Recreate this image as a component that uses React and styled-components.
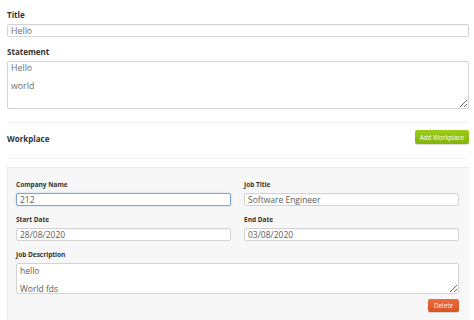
import styled, { createGlobalStyle } from 'styled-components';

const Global = createGlobalStyle`
  body {
    margin: 0;
    background: #fff;
    font-family: "Open Sans", "Liberation Sans", sans-serif;
    color: #333;
  }
`;

const Page = styled.div`
  padding: 9px 5px 0 7px;
  display: flex;
  flex-direction: column;
`;

const Field = styled.div`
  display: flex;
  flex-direction: column;
  margin-bottom: ${(p) => p.$mb || 0}px;
`;

const Label = styled.label`
  font-size: ${(p) => (p.$small ? 6.5 : 8)}px;
  font-weight: 700;
  line-height: ${(p) => (p.$small ? 9 : 11)}px;
  color: #333;
  margin-bottom: 4px;
`;

const Input = styled.input`
  box-sizing: border-box;
  height: 13px;
  width: 100%;
  padding: 0 3px;
  font-family: inherit;
  font-size: ${(p) => (p.$big ? 8.5 : 8.8)}px;
  color: ${(p) => (p.$big ? '#5a5a5a' : '#6e6e6e')};
  border: 1px solid ${(p) => (p.$focus ? '#7aa7d6' : '#d4d4d4')};
  border-radius: 2px;
  background: #fff;
  box-shadow: ${(p) => (p.$focus ? '0 0 2px rgba(102,160,220,0.5)' : 'inset 0 1px 1px rgba(0,0,0,0.04)')};
  outline: none;
`;

const Area = styled.textarea`
  box-sizing: border-box;
  height: ${(p) => p.$h}px;
  width: 100%;
  padding: 2px 3px;
  font-family: inherit;
  font-size: ${(p) => (p.$big ? 8.5 : 8.8)}px;
  line-height: 9px;
  color: ${(p) => (p.$big ? '#5a5a5a' : '#6e6e6e')};
  border: 1px solid #d4d4d4;
  border-radius: 2px;
  resize: vertical;
  outline: none;
  display: block;
`;

const Divider = styled.div`
  height: 1px;
  background: #f3f3f3;
`;

const SectionHead = styled.div`
  display: flex;
  align-items: flex-start;
  justify-content: space-between;
  height: 35px;
`;

const SectionTitle = styled.div`
  margin-top: 10px;
  font-size: 8px;
  line-height: 11px;
  font-weight: 700;
  color: #333;
`;

const Button = styled.button`
  margin-top: ${(p) => p.$mt || 0}px;
  height: ${(p) => (p.$danger ? 13 : 14)}px;
  padding: 0 ${(p) => (p.$pad ? p.$pad : 5)}px;
  border: none;
  border-radius: 2px;
  color: #fff;
  font-family: inherit;
  font-size: 6.3px;
  line-height: 13px;
  background: ${(p) =>
    p.$danger
      ? 'linear-gradient(#ea6c40, #d9531e)'
      : 'linear-gradient(#9ccc1a, #84b30c)'};
  box-shadow: 0 1px 1px rgba(0,0,0,0.15);
`;

const Panel = styled.div`
  margin-top: 8px;
  background: #f7f7f7;
  border: 1px solid #ececec;
  border-right: none;
  border-bottom: none;
  padding: 12px 10px 10px 8px;
  display: flex;
  flex-direction: column;
`;

const Grid = styled.div`
  display: grid;
  grid-template-columns: 215px 215px;
  column-gap: 13px;
  row-gap: 9px;
`;

const FullRow = styled(Field)`
  grid-column: 1 / span 2;
`;

const Actions = styled.div`
  display: flex;
  justify-content: flex-end;
  margin-top: 5px;
`;

export default function App() {
  return (
    <>
      <Global />
      <Page>
        <Field $mb={9}>
          <Label>Title</Label>
          <Input defaultValue="Hello" />
        </Field>
        <Field $mb={13}>
          <Label>Statement</Label>
          <Area $h={48} defaultValue={'Hello\n\nworld'} />
        </Field>
        <Divider />
        <SectionHead>
          <SectionTitle>Workplace</SectionTitle>
          <Button $mt={7}>Add Workplace</Button>
        </SectionHead>
        <Divider />
        <Panel>
          <Grid>
            <Field>
              <Label $small>Company Name</Label>
              <Input $focus $big defaultValue="212" />
            </Field>
            <Field>
              <Label $small>Job Title</Label>
              <Input $big defaultValue="Software Engineer" />
            </Field>
            <Field>
              <Label $small>Start Date</Label>
              <Input $big defaultValue="28/08/2020" />
            </Field>
            <Field>
              <Label $small>End Date</Label>
              <Input $big defaultValue="03/08/2020" />
            </Field>
            <FullRow>
              <Label $small>Job Description</Label>
              <Area $h={31} $big defaultValue={'hello\n\nWorld fds'} />
            </FullRow>
          </Grid>
          <Actions>
            <Button $danger $pad={6}>Delete</Button>
          </Actions>
        </Panel>
      </Page>
    </>
  );
}
